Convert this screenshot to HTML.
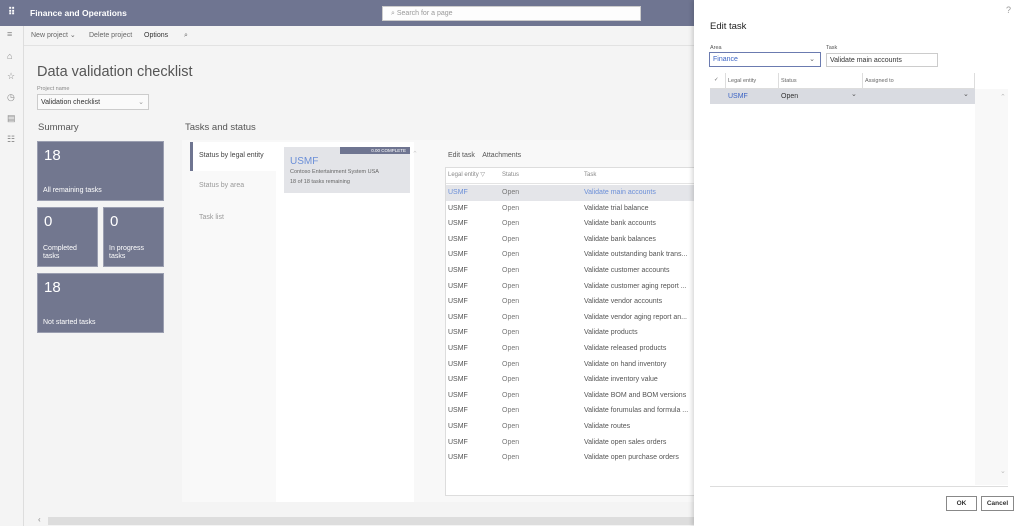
<!DOCTYPE html>
<html><head><style>
*{box-sizing:border-box;margin:0;padding:0}
body{width:1024px;height:526px;overflow:hidden;background:#f4f4f4;font-family:"Liberation Sans",sans-serif;position:relative;color:#333}
.a{position:absolute}
.top{left:0;top:0;width:694px;height:26px;background:#6f7591;color:#fff;font-size:8.5px;font-weight:bold}
.tile{background:#72778f;color:#fff;border:1px solid #9a9eb0}
.tile .n{position:absolute;left:6px;top:5px;font-size:15px}
.tile .l{position:absolute;left:5px;bottom:5px;font-size:7px;line-height:8px}
.row{position:absolute;left:446px;width:248px;height:15.6px;font-size:7px;color:#555;line-height:15.6px}
.row span{position:absolute}
</style></head><body>
<div class="a top"><span class="a" style="left:8px;top:7px;font-size:10px;letter-spacing:-1px">⠿</span><span class="a" style="left:30px;top:8px">Finance and Operations</span>
<div class="a" style="left:382px;top:6px;width:259px;height:15px;background:#fdfdfd;border:1px solid #ccc;color:#999;font-weight:normal;font-size:7px;padding:3px 0 0 8px">⌕ Search for a page</div></div>
<div class="a" style="left:0;top:26px;width:24px;height:500px;background:#f4f4f4;border-right:1px solid #ddd;color:#888;font-size:9px">
<div class="a" style="left:7px;top:3px">≡</div><div class="a" style="left:7px;top:25px">⌂</div><div class="a" style="left:7px;top:45px">☆</div><div class="a" style="left:7px;top:66px">◷</div><div class="a" style="left:7px;top:87px">▤</div><div class="a" style="left:7px;top:108px">☷</div></div>
<div class="a" style="left:24px;top:26px;width:670px;height:20px;border-bottom:1px solid #e2e2e2;font-size:7px;color:#666;line-height:20px">
<span class="a" style="left:7px">New project ⌄</span><span class="a" style="left:65px">Delete project</span><span class="a" style="left:120px;color:#333">Options</span><span class="a" style="left:160px">⌕</span></div>
<div class="a" style="left:37px;top:64px;font-size:14.5px;color:#555">Data validation checklist</div>
<div class="a" style="left:37px;top:86px;font-size:5.5px;color:#888">Project name</div>
<div class="a" style="left:37px;top:94px;width:112px;height:16px;border:1px solid #ccc;font-size:7px;padding:4px 0 0 3px;background:#fafafa">Validation checklist<span class="a" style="right:4px;top:3px;color:#999">⌄</span></div>
<div class="a" style="left:38px;top:122px;font-size:9.5px;color:#555">Summary</div>
<div class="a" style="left:185px;top:122px;font-size:9.5px;color:#555">Tasks and status</div>
<div class="a tile" style="left:37px;top:141px;width:127px;height:60px"><div class="n">18</div><div class="l">All remaining tasks</div></div>
<div class="a tile" style="left:37px;top:207px;width:61px;height:60px"><div class="n">0</div><div class="l">Completed<br>tasks</div></div>
<div class="a tile" style="left:103px;top:207px;width:61px;height:60px"><div class="n">0</div><div class="l">In progress<br>tasks</div></div>
<div class="a tile" style="left:37px;top:273px;width:127px;height:60px"><div class="n">18</div><div class="l">Not started tasks</div></div>
<div class="a" style="left:182px;top:140px;width:512px;height:362px;background:#f8f8f8"></div>
<div class="a" style="left:190px;top:142px;width:86px;height:360px;background:#f9f9f9;font-size:7px;color:#999"></div>
<div class="a" style="left:190px;top:142px;width:86px;height:29px;background:#fff;border-left:3px solid #6f7591;font-size:7px;padding:10px 0 0 6px;color:#444">Status by legal entity</div>
<div class="a" style="left:199px;top:182px;font-size:7px;color:#999">Status by area</div>
<div class="a" style="left:199px;top:214px;font-size:7px;color:#999">Task list</div>
<div class="a" style="left:276px;top:142px;width:138px;height:360px;background:#fff"></div>
<div class="a" style="left:284px;top:147px;width:126px;height:46px;background:#e3e4e8"><div class="a" style="right:0;top:0;width:70px;height:7px;background:#6f7591;color:#fff;font-size:4.5px;text-align:right;padding-right:4px;line-height:7px">0.00 COMPLETE</div>
<div class="a" style="left:6px;top:9px;font-size:10px;color:#6b8fd8">USMF</div><div class="a" style="left:6px;top:22px;font-size:5.5px;color:#666">Contoso Entertainment System USA</div><div class="a" style="left:6px;top:32px;font-size:5.5px;color:#666">18 of 18 tasks remaining</div></div>
<div class="a" style="left:412px;top:150px;font-size:7px;color:#ccc">⌃</div>
<div class="a" style="left:448px;top:152px;font-size:7px;color:#555">Edit task &nbsp;&nbsp; Attachments</div>
<div class="a" style="left:445px;top:167px;width:260px;height:329px;border:1px solid #ddd;background:#fff"></div>
<div class="row" style="top:168px;font-size:6px;color:#888;border-bottom:1px solid #e4e4e4"><span style="left:2px">Legal entity ▽</span><span style="left:56px">Status</span><span style="left:138px">Task</span></div>
<div id="rows"></div>
<div class="a" style="left:48px;top:517px;width:646px;height:8px;background:#ddd"></div>
<div class="a" style="left:38px;top:515px;font-size:8px;color:#888">‹</div>
<!-- panel -->
<div class="a" style="left:694px;top:0;width:330px;height:526px;background:#fff;box-shadow:-2px 0 4px rgba(0,0,0,.15)">
<div class="a" style="left:312px;top:5px;font-size:9px;color:#999">?</div>
<div class="a" style="left:16px;top:21px;font-size:9.5px;color:#222">Edit task</div>
<div class="a" style="left:16px;top:45px;font-size:5.5px;color:#555">Area</div>
<div class="a" style="left:132px;top:45px;font-size:5.5px;color:#555">Task</div>
<div class="a" style="left:15px;top:52px;width:112px;height:15px;border:1px solid #6b7bb0;font-size:7px;color:#3b63c4;padding:3px 0 0 3px">Finance<span class="a" style="right:5px;top:2px;color:#666">⌄</span></div>
<div class="a" style="left:132px;top:53px;width:112px;height:14px;border:1px solid #ccc;font-size:7px;padding:3px 0 0 3px">Validate main accounts</div>
<div class="a" style="left:16px;top:73px;width:265px;height:16px;border-bottom:1px solid #ddd;font-size:5.5px;color:#666">
<span class="a" style="left:4px;top:4px">✓</span><span class="a" style="left:18px;top:5px">Legal entity</span><span class="a" style="left:71px;top:5px">Status</span><span class="a" style="left:155px;top:5px">Assigned to</span>
<div class="a" style="left:15px;top:0;width:1px;height:16px;background:#ddd"></div><div class="a" style="left:68px;top:0;width:1px;height:16px;background:#ddd"></div><div class="a" style="left:152px;top:0;width:1px;height:16px;background:#ddd"></div><div class="a" style="left:264px;top:0;width:1px;height:16px;background:#ddd"></div></div>
<div class="a" style="left:16px;top:89px;width:265px;height:15px;background:#d9dbe1;font-size:7px">
<span class="a" style="left:18px;top:4px;color:#3b63c4">USMF</span><span class="a" style="left:71px;top:4px">Open</span><span class="a" style="left:141px;top:1px;color:#555">⌄</span><span class="a" style="left:253px;top:1px;color:#555">⌄</span></div>
<div class="a" style="left:281px;top:89px;width:33px;height:396px;background:#f8f8f8;font-size:7px;color:#bbb"><span class="a" style="left:25px;top:4px">⌃</span><span class="a" style="left:25px;top:378px">⌄</span></div>
<div class="a" style="left:16px;top:486px;width:298px;height:1px;background:#ddd"></div>
<div class="a" style="left:252px;top:496px;width:31px;height:15px;border:1px solid #888;font-size:6.5px;font-weight:bold;text-align:center;line-height:13px">OK</div>
<div class="a" style="left:287px;top:496px;width:33px;height:15px;border:1px solid #888;font-size:6.5px;font-weight:bold;text-align:center;line-height:13px">Cancel</div>
</div>
<script>
var t=["Validate main accounts","Validate trial balance","Validate bank accounts","Validate bank balances","Validate outstanding bank trans...","Validate customer accounts","Validate customer aging report ...","Validate vendor accounts","Validate vendor aging report an...","Validate products","Validate released products","Validate on hand inventory","Validate inventory value","Validate BOM and BOM versions","Validate forumulas and formula ...","Validate routes","Validate open sales orders","Validate open purchase orders"];
var h="";t.forEach(function(x,i){var s=i==0?"background:#e4e5e9;color:#6b8fd8":"";h+='<div class="row" style="top:'+(185+i*15.6)+'px;'+s+'"><span style="left:2px">USMF</span><span style="left:56px;color:#777">Open</span><span style="left:138px">'+x+'</span></div>'});document.getElementById("rows").innerHTML=h;
</script>
</body></html>
